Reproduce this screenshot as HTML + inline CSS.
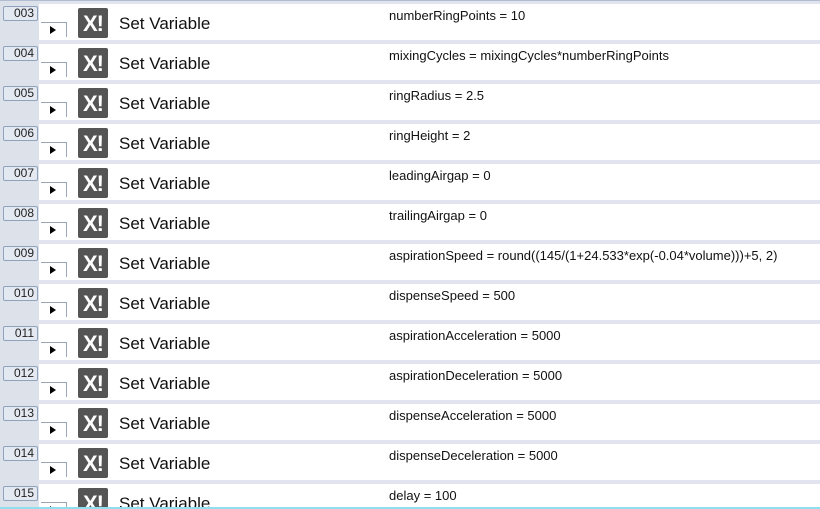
<!DOCTYPE html>
<html><head><style>
html,body{margin:0;width:820px;height:509px;overflow:hidden}
body{background:#e1e3ee;font-family:"Liberation Sans",sans-serif;position:relative}
.top{position:absolute;left:0;top:0;width:820px;height:1px;background:#b0bccf}
.left{position:absolute;left:0;top:1px;width:39px;height:508px;background:#dde2ea}
.row{position:absolute;left:39px;width:781px;height:36px;background:#fff}
.num{position:absolute;left:3px;width:33px;height:13px;border:1px solid #8fa3bd;border-radius:2px;background:#e4e9f1;font-size:12px;line-height:12px;text-align:right;color:#222}
.num span{padding-right:3px}
.tri{position:absolute;left:41px;width:25px;height:14px;border-top:1px solid #9aa6b6;border-right:1px solid #9aa6b6}
.tri:after{content:"";position:absolute;left:9px;top:3px;border-left:6px solid #000;border-top:4.5px solid transparent;border-bottom:4.5px solid transparent}
.ic{position:absolute;left:78px;width:30px;height:30px;background:#555;border-radius:2px;color:#fff;font-weight:bold;font-size:22px;line-height:32px;text-align:center;letter-spacing:-1px}
.t{position:absolute;left:119px;font-size:17px;color:#111}
.e{position:absolute;left:389px;font-size:13px;color:#111}
.bot{position:absolute;left:0;top:507px;width:820px;height:2px;background:#8fe0ef}
</style></head><body>
<div class="top"></div><div class="left"></div>
<div id="c"></div>
<script>
var d=[["003","numberRingPoints = 10"],["004","mixingCycles = mixingCycles*numberRingPoints"],["005","ringRadius = 2.5"],["006","ringHeight = 2"],["007","leadingAirgap = 0"],["008","trailingAirgap = 0"],["009","aspirationSpeed = round((145/(1+24.533*exp(-0.04*volume)))+5, 2)"],["010","dispenseSpeed = 500"],["011","aspirationAcceleration = 5000"],["012","aspirationDeceleration = 5000"],["013","dispenseAcceleration = 5000"],["014","dispenseDeceleration = 5000"],["015","delay = 100"]];
var h="";
d.forEach(function(r,i){var y=4+i*40;
h+='<div class="row" style="top:'+y+'px"></div>';
h+='<div class="num" style="top:'+(y+2)+'px"><span>'+r[0]+'</span></div>';
h+='<div class="tri" style="top:'+(y+18)+'px"></div>';
h+='<div class="ic" style="top:'+(y+4)+'px">X!</div>';
h+='<div class="t" style="top:'+(y+10)+'px">Set Variable</div>';
h+='<div class="e" style="top:'+(y+4)+'px">'+r[1]+'</div>';});
document.getElementById("c").innerHTML=h;
</script>
<div class="bot"></div>
</body></html>
